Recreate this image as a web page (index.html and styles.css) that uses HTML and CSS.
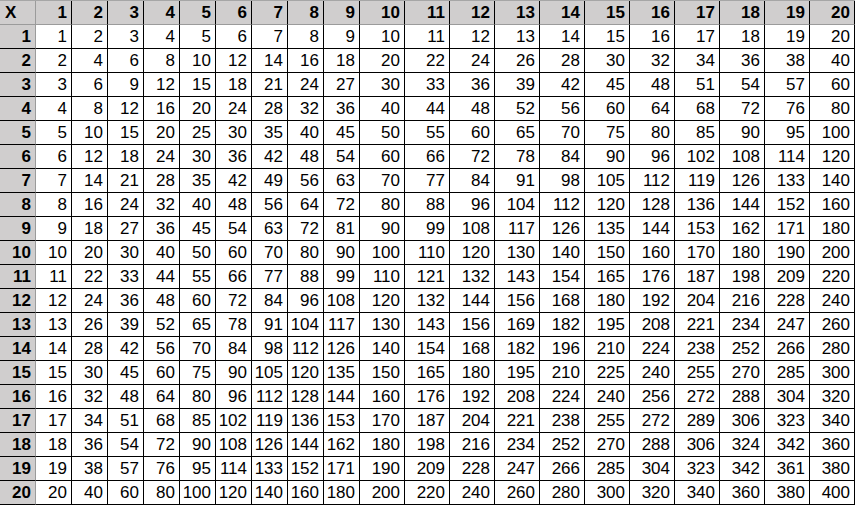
FILE: index.html
```html
<!DOCTYPE html>
<html lang="en">
<head>
<meta charset="utf-8">
<title>Multiplication table</title>
<link rel="stylesheet" href="styles.css">
</head>
<body>
<div class="sheet">
<b class="corner">X</b><b class="top">1</b><b class="top">2</b><b class="top">3</b><b class="top">4</b><b class="top">5</b><b class="top">6</b><b class="top">7</b><b class="top">8</b><b class="top">9</b><b class="top">10</b><b class="top">11</b><b class="top">12</b><b class="top">13</b><b class="top">14</b><b class="top">15</b><b class="top">16</b><b class="top">17</b><b class="top">18</b><b class="top">19</b><b class="top">20</b>
<b class="side">1</b><span>1</span><span>2</span><span>3</span><span>4</span><span>5</span><span>6</span><span>7</span><span>8</span><span>9</span><span>10</span><span>11</span><span>12</span><span>13</span><span>14</span><span>15</span><span>16</span><span>17</span><span>18</span><span>19</span><span>20</span>
<b class="side">2</b><span>2</span><span>4</span><span>6</span><span>8</span><span>10</span><span>12</span><span>14</span><span>16</span><span>18</span><span>20</span><span>22</span><span>24</span><span>26</span><span>28</span><span>30</span><span>32</span><span>34</span><span>36</span><span>38</span><span>40</span>
<b class="side">3</b><span>3</span><span>6</span><span>9</span><span>12</span><span>15</span><span>18</span><span>21</span><span>24</span><span>27</span><span>30</span><span>33</span><span>36</span><span>39</span><span>42</span><span>45</span><span>48</span><span>51</span><span>54</span><span>57</span><span>60</span>
<b class="side">4</b><span>4</span><span>8</span><span>12</span><span>16</span><span>20</span><span>24</span><span>28</span><span>32</span><span>36</span><span>40</span><span>44</span><span>48</span><span>52</span><span>56</span><span>60</span><span>64</span><span>68</span><span>72</span><span>76</span><span>80</span>
<b class="side">5</b><span>5</span><span>10</span><span>15</span><span>20</span><span>25</span><span>30</span><span>35</span><span>40</span><span>45</span><span>50</span><span>55</span><span>60</span><span>65</span><span>70</span><span>75</span><span>80</span><span>85</span><span>90</span><span>95</span><span>100</span>
<b class="side">6</b><span>6</span><span>12</span><span>18</span><span>24</span><span>30</span><span>36</span><span>42</span><span>48</span><span>54</span><span>60</span><span>66</span><span>72</span><span>78</span><span>84</span><span>90</span><span>96</span><span>102</span><span>108</span><span>114</span><span>120</span>
<b class="side">7</b><span>7</span><span>14</span><span>21</span><span>28</span><span>35</span><span>42</span><span>49</span><span>56</span><span>63</span><span>70</span><span>77</span><span>84</span><span>91</span><span>98</span><span>105</span><span>112</span><span>119</span><span>126</span><span>133</span><span>140</span>
<b class="side">8</b><span>8</span><span>16</span><span>24</span><span>32</span><span>40</span><span>48</span><span>56</span><span>64</span><span>72</span><span>80</span><span>88</span><span>96</span><span>104</span><span>112</span><span>120</span><span>128</span><span>136</span><span>144</span><span>152</span><span>160</span>
<b class="side">9</b><span>9</span><span>18</span><span>27</span><span>36</span><span>45</span><span>54</span><span>63</span><span>72</span><span>81</span><span>90</span><span>99</span><span>108</span><span>117</span><span>126</span><span>135</span><span>144</span><span>153</span><span>162</span><span>171</span><span>180</span>
<b class="side">10</b><span>10</span><span>20</span><span>30</span><span>40</span><span>50</span><span>60</span><span>70</span><span>80</span><span>90</span><span>100</span><span>110</span><span>120</span><span>130</span><span>140</span><span>150</span><span>160</span><span>170</span><span>180</span><span>190</span><span>200</span>
<b class="side">11</b><span>11</span><span>22</span><span>33</span><span>44</span><span>55</span><span>66</span><span>77</span><span>88</span><span>99</span><span>110</span><span>121</span><span>132</span><span>143</span><span>154</span><span>165</span><span>176</span><span>187</span><span>198</span><span>209</span><span>220</span>
<b class="side">12</b><span>12</span><span>24</span><span>36</span><span>48</span><span>60</span><span>72</span><span>84</span><span>96</span><span>108</span><span>120</span><span>132</span><span>144</span><span>156</span><span>168</span><span>180</span><span>192</span><span>204</span><span>216</span><span>228</span><span>240</span>
<b class="side">13</b><span>13</span><span>26</span><span>39</span><span>52</span><span>65</span><span>78</span><span>91</span><span>104</span><span>117</span><span>130</span><span>143</span><span>156</span><span>169</span><span>182</span><span>195</span><span>208</span><span>221</span><span>234</span><span>247</span><span>260</span>
<b class="side">14</b><span>14</span><span>28</span><span>42</span><span>56</span><span>70</span><span>84</span><span>98</span><span>112</span><span>126</span><span>140</span><span>154</span><span>168</span><span>182</span><span>196</span><span>210</span><span>224</span><span>238</span><span>252</span><span>266</span><span>280</span>
<b class="side">15</b><span>15</span><span>30</span><span>45</span><span>60</span><span>75</span><span>90</span><span>105</span><span>120</span><span>135</span><span>150</span><span>165</span><span>180</span><span>195</span><span>210</span><span>225</span><span>240</span><span>255</span><span>270</span><span>285</span><span>300</span>
<b class="side">16</b><span>16</span><span>32</span><span>48</span><span>64</span><span>80</span><span>96</span><span>112</span><span>128</span><span>144</span><span>160</span><span>176</span><span>192</span><span>208</span><span>224</span><span>240</span><span>256</span><span>272</span><span>288</span><span>304</span><span>320</span>
<b class="side">17</b><span>17</span><span>34</span><span>51</span><span>68</span><span>85</span><span>102</span><span>119</span><span>136</span><span>153</span><span>170</span><span>187</span><span>204</span><span>221</span><span>238</span><span>255</span><span>272</span><span>289</span><span>306</span><span>323</span><span>340</span>
<b class="side">18</b><span>18</span><span>36</span><span>54</span><span>72</span><span>90</span><span>108</span><span>126</span><span>144</span><span>162</span><span>180</span><span>198</span><span>216</span><span>234</span><span>252</span><span>270</span><span>288</span><span>306</span><span>324</span><span>342</span><span>360</span>
<b class="side">19</b><span>19</span><span>38</span><span>57</span><span>76</span><span>95</span><span>114</span><span>133</span><span>152</span><span>171</span><span>190</span><span>209</span><span>228</span><span>247</span><span>266</span><span>285</span><span>304</span><span>323</span><span>342</span><span>361</span><span>380</span>
<b class="side">20</b><span>20</span><span>40</span><span>60</span><span>80</span><span>100</span><span>120</span><span>140</span><span>160</span><span>180</span><span>200</span><span>220</span><span>240</span><span>260</span><span>280</span><span>300</span><span>320</span><span>340</span><span>360</span><span>380</span><span>400</span>
</div>
</body>
</html>
```

FILE: styles.css
```css
html, body {
  margin: 0;
  padding: 0;
  background: #ffffff;
}

.sheet {
  display: grid;
  grid-template-columns: 36px repeat(9, 36px) repeat(11, 45px);
  grid-auto-rows: 24px;
  width: 855px;
  border-top: 1px solid #a6a6a6;
  font-family: "Liberation Sans Narrow", "Liberation Sans", Arial, sans-serif;
  font-size: 17px;
  color: #000000;
}

.sheet > * {
  box-sizing: border-box;
  display: flex;
  align-items: flex-end;
  justify-content: flex-end;
  padding: 0 4px 3px 0;
  line-height: 1;
  border-right: 1px solid #000000;
  border-bottom: 1px solid #000000;
  white-space: nowrap;
}

.sheet > b {
  font-weight: 700;
  background: #d0cece;
}

.sheet > .top {
  border-bottom-color: #9b9b9b;
}

.sheet > .side {
  border-right-color: #9b9b9b;
}

.sheet > .corner {
  justify-content: flex-start;
  padding-left: 5px;
  border-right-color: #9b9b9b;
  border-bottom-color: #9b9b9b;
}
```
